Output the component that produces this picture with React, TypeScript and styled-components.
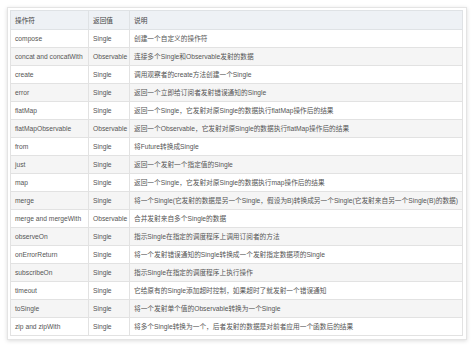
import * as React from 'react';
import styled, { createGlobalStyle } from 'styled-components';

interface Row {
  name: string;
  ret: string;
  desc: string;
}

const rows: Row[] = [
  { name: 'compose', ret: 'Single', desc: '创建一个自定义的操作符' },
  { name: 'concat and concatWith', ret: 'Observable', desc: '连接多个Single和Observable发射的数据' },
  { name: 'create', ret: 'Single', desc: '调用观察者的create方法创建一个Single' },
  { name: 'error', ret: 'Single', desc: '返回一个立即给订阅者发射错误通知的Single' },
  { name: 'flatMap', ret: 'Single', desc: '返回一个Single，它发射对原Single的数据执行flatMap操作后的结果' },
  { name: 'flatMapObservable', ret: 'Observable', desc: '返回一个Observable，它发射对原Single的数据执行flatMap操作后的结果' },
  { name: 'from', ret: 'Single', desc: '将Future转换成Single' },
  { name: 'just', ret: 'Single', desc: '返回一个发射一个指定值的Single' },
  { name: 'map', ret: 'Single', desc: '返回一个Single，它发射对原Single的数据执行map操作后的结果' },
  { name: 'merge', ret: 'Single', desc: '将一个Single(它发射的数据是另一个Single，假设为B)转换成另一个Single(它发射来自另一个Single(B)的数据)' },
  { name: 'merge and mergeWith', ret: 'Observable', desc: '合并发射来自多个Single的数据' },
  { name: 'observeOn', ret: 'Single', desc: '指示Single在指定的调度程序上调用订阅者的方法' },
  { name: 'onErrorReturn', ret: 'Single', desc: '将一个发射错误通知的Single转换成一个发射指定数据项的Single' },
  { name: 'subscribeOn', ret: 'Single', desc: '指示Single在指定的调度程序上执行操作' },
  { name: 'timeout', ret: 'Single', desc: '它给原有的Single添加超时控制，如果超时了就发射一个错误通知' },
  { name: 'toSingle', ret: 'Single', desc: '将一个发射单个值的Observable转换为一个Single' },
  { name: 'zip and zipWith', ret: 'Single', desc: '将多个Single转换为一个，后者发射的数据是对前者应用一个函数后的结果' },
];

const GlobalStyle = createGlobalStyle`
  html, body {
    margin: 0;
    padding: 0;
    background: #ffffff;
  }
  body {
    font-family: "Liberation Sans", "Noto Sans CJK SC", sans-serif;
  }
`;

export default function App() {
  return (
    <>
      <GlobalStyle />
      <Page>
        <Card>
          <Table>
            <colgroup>
              <col style={{ width: 78 }} />
              <col style={{ width: 41 }} />
              <col />
            </colgroup>
            <thead>
              <HeadRow>
                <Th>操作符</Th>
                <Th>返回值</Th>
                <Th>说明</Th>
              </HeadRow>
            </thead>
            <tbody>
              {rows.map((r, i) => (
                <Tr key={r.name} $striped={i % 2 === 1}>
                  <Td>{r.name}</Td>
                  <Td>{r.ret}</Td>
                  <Td>{r.desc}</Td>
                </Tr>
              ))}
            </tbody>
          </Table>
        </Card>
      </Page>
    </>
  );
}

const Page = styled.div`
  width: 474px;
  height: 346px;
  padding: 7px 0 0 7px;
  box-sizing: border-box;
`;

const Card = styled.div`
  width: 460px;
  box-sizing: border-box;
  padding: 2px 3px 3px 2px;
  background: #ffffff;
  border: 1px solid #e4e4e4;
  box-shadow: 0 1px 4px rgba(0, 0, 0, 0.14);
`;

const Table = styled.table`
  width: 453px;
  border-collapse: collapse;
  table-layout: fixed;
  font-size: 6.7px;
  line-height: 9px;
  color: #555;
`;

const HeadRow = styled.tr`
  height: 19px;
`;

const Th = styled.th`
  padding: 0 0 0 4px;
  text-align: left;
  font-weight: normal;
  color: #444;
  background: #eef1f5;
  border: 1px solid #dfe2e5;
  white-space: nowrap;
`;

const Tr = styled.tr<{ $striped: boolean }>`
  height: 18px;
  background: ${p => (p.$striped ? '#f5f5f5' : '#ffffff')};
`;

const Td = styled.td`
  padding: 0 0 0 4px;
  border: 1px solid #e2e2e2;
  white-space: nowrap;
  overflow: hidden;
`;
